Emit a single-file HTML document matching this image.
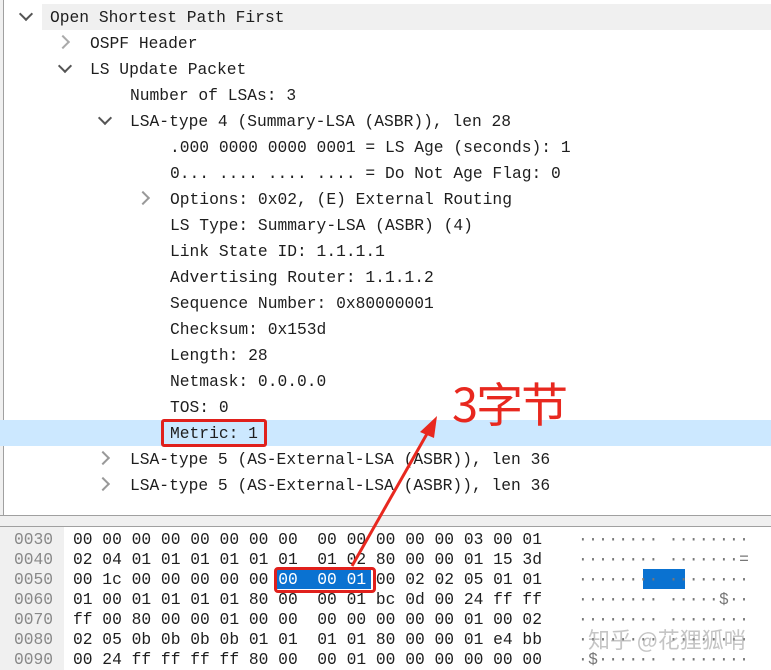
<!DOCTYPE html>
<html><head><meta charset="utf-8"><style>
body{margin:0;width:771px;height:670px;background:#fff;position:relative;overflow:hidden;font-family:"Liberation Mono",monospace;font-size:16.3px;color:#1e1e1e}
.t{position:absolute;white-space:pre;line-height:26px;height:26px;margin-top:1px}
.c{position:absolute;width:8px;height:8px;border-right:2px solid #555;border-bottom:2px solid #555}
.h{position:absolute;white-space:pre;line-height:20px;font-size:16.3px}
</style></head><body>
<div style="position:absolute;left:0;top:0;width:3px;height:515px;border-right:1px solid #a0a0a0;background:#f0f0f0"></div>
<div style="position:absolute;left:42px;top:4px;width:729px;height:26px;background:#f0f0f0"></div>
<div style="position:absolute;left:0;top:420px;width:771px;height:26px;background:#cce8ff"></div>
<div class="c" style="left:21px;top:9px;transform:rotate(45deg)"></div>
<div class="t" style="left:50px;top:4px">Open Shortest Path First</div>
<div class="c" style="left:58px;top:37px;transform:rotate(-45deg);border-color:#aaa"></div>
<div class="t" style="left:90px;top:30px">OSPF Header</div>
<div class="c" style="left:60px;top:61px;transform:rotate(45deg)"></div>
<div class="t" style="left:90px;top:56px">LS Update Packet</div>
<div class="t" style="left:130px;top:82px">Number of LSAs: 3</div>
<div class="c" style="left:100px;top:113px;transform:rotate(45deg)"></div>
<div class="t" style="left:130px;top:108px">LSA-type 4 (Summary-LSA (ASBR)), len 28</div>
<div class="t" style="left:170px;top:134px">.000 0000 0000 0001 = LS Age (seconds): 1</div>
<div class="t" style="left:170px;top:160px">0... .... .... .... = Do Not Age Flag: 0</div>
<div class="c" style="left:138px;top:193px;transform:rotate(-45deg);border-color:#999"></div>
<div class="t" style="left:170px;top:186px">Options: 0x02, (E) External Routing</div>
<div class="t" style="left:170px;top:212px">LS Type: Summary-LSA (ASBR) (4)</div>
<div class="t" style="left:170px;top:238px">Link State ID: 1.1.1.1</div>
<div class="t" style="left:170px;top:264px">Advertising Router: 1.1.1.2</div>
<div class="t" style="left:170px;top:290px">Sequence Number: 0x80000001</div>
<div class="t" style="left:170px;top:316px">Checksum: 0x153d</div>
<div class="t" style="left:170px;top:342px">Length: 28</div>
<div class="t" style="left:170px;top:368px">Netmask: 0.0.0.0</div>
<div class="t" style="left:170px;top:394px">TOS: 0</div>
<div class="t" style="left:170px;top:420px">Metric: 1</div>
<div style="position:absolute;left:161px;top:419px;width:100px;height:22px;border:3px solid #e0201c;border-radius:3px"></div>
<div class="c" style="left:98px;top:453px;transform:rotate(-45deg);border-color:#999"></div>
<div class="t" style="left:130px;top:446px">LSA-type 5 (AS-External-LSA (ASBR)), len 36</div>
<div class="c" style="left:98px;top:479px;transform:rotate(-45deg);border-color:#999"></div>
<div class="t" style="left:130px;top:472px">LSA-type 5 (AS-External-LSA (ASBR)), len 36</div>
<div style="position:absolute;left:0;top:515px;width:771px;height:10px;background:#f0f0f0;border-top:1px solid #a0a0a0;border-bottom:1px solid #a0a0a0"></div>
<div style="position:absolute;left:0;top:527px;width:64px;height:143px;background:#f0f0f0"></div>
<div class="h" style="left:14px;top:530px;color:#888">0030
0040
0050
0060
0070
0080
0090</div>
<div style="position:absolute;left:277px;top:570px;width:94px;height:19px;background:#0a72d1"></div>
<div class="h" style="left:73px;top:530px">00 00 00 00 00 00 00 00  00 00 00 00 00 03 00 01
02 04 01 01 01 01 01 01  01 02 80 00 00 01 15 3d
00 1c 00 00 00 00 00 <span style="color:#fff">00  00 01</span> 00 02 02 05 01 01
01 00 01 01 01 01 80 00  00 01 bc 0d 00 24 ff ff
ff 00 80 00 00 01 00 00  00 00 00 00 00 01 00 02
02 05 0b 0b 0b 0b 01 01  01 01 80 00 00 01 e4 bb
00 24 ff ff ff ff 80 00  00 01 00 00 00 00 00 00</div>
<div style="position:absolute;left:274px;top:567px;width:96px;height:20px;border:3px solid #e0201c;border-radius:4px"></div>
<div style="position:absolute;left:643px;top:569px;width:42px;height:20px;background:#0a72d1"></div>
<div class="h" style="left:578px;top:530px;color:#777;letter-spacing:0.3px">········ ········
········ ·······=
········ ········
········ ·····$··
········ ········
········ ········
·$······ ········</div>
<div style="position:absolute;left:588px;top:623px;font-family:'Noto Sans CJK SC',sans-serif;font-size:22px;color:rgba(150,150,150,0.55);white-space:nowrap">知乎 @花狸狐哨</div>
<svg style="position:absolute;left:0;top:0" width="771" height="670"><line x1="352" y1="566" x2="428" y2="432" stroke="#e8281f" stroke-width="3"/><polygon points="437,416 420,432 434,438" fill="#e8281f"/></svg>
<div style="position:absolute;left:452px;top:374px;font-family:'Noto Sans CJK SC',sans-serif;font-size:47px;line-height:56px;color:#e8281f;white-space:nowrap;letter-spacing:-2px">3字节</div>
</body></html>
